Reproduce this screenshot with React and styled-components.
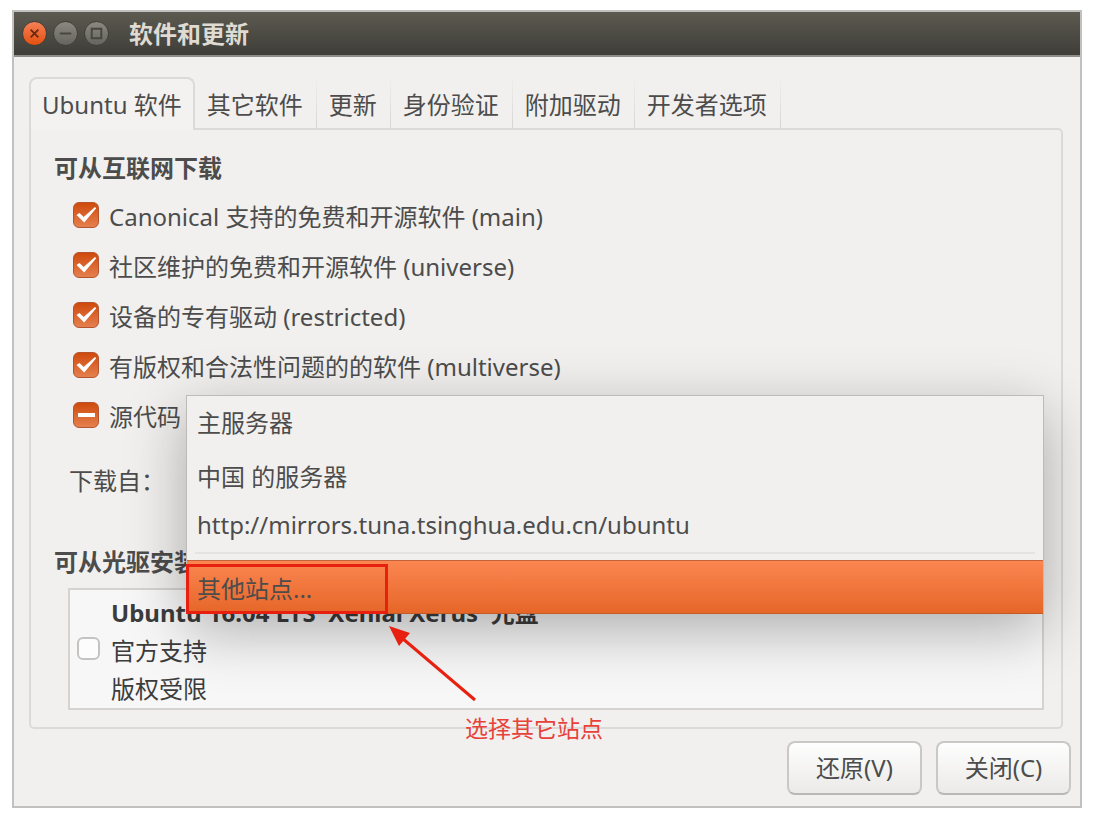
import React, { useState, useRef, useEffect } from 'react'
import styled, { createGlobalStyle, css } from 'styled-components'

const tabs = ['Ubuntu 软件', '其它软件', '更新', '身份验证', '附加驱动', '开发者选项']

const sources = [
  { id: 'main', label: 'Canonical 支持的免费和开源软件 (main)', checked: true },
  { id: 'universe', label: '社区维护的免费和开源软件 (universe)', checked: true },
  { id: 'restricted', label: '设备的专有驱动 (restricted)', checked: true },
  { id: 'multiverse', label: '有版权和合法性问题的的软件 (multiverse)', checked: true },
  { id: 'source', label: '源代码', mixed: true },
]

const servers = ['主服务器', '中国 的服务器', 'http://mirrors.tuna.tsinghua.edu.cn/ubuntu']

const SourceCheck = ({ source }) => {
  const [checked, setChecked] = useState(!!source.checked)
  const [mixed, setMixed] = useState(!!source.mixed)
  const input = useRef(null)

  useEffect(() => {
    input.current.indeterminate = mixed
  }, [mixed])

  const toggle = (e) => {
    setMixed(false)
    setChecked(e.target.checked)
  }

  return (
    <CheckRow htmlFor={source.id}>
      <CheckCell>
        <Check ref={input} id={source.id} type="checkbox" checked={checked} onChange={toggle} />
        <Mark viewBox="0 0 26 26" aria-hidden="true">
          {mixed && <rect x="5" y="11" width="17" height="4" fill="#fff" />}
          {checked && !mixed && <path d="M3.5 13 L6.5 11 L10.6 15 L22 5 L23.2 6.2 L11.2 20.5 Z" fill="#fff" />}
        </Mark>
      </CheckCell>
      <span>{source.label}</span>
    </CheckRow>
  )
}

const App = () => {
  const [tab, setTab] = useState(tabs[0])
  const [disc, setDisc] = useState(false)

  return (
    <>
      <GlobalStyle />
      <Window>
        <TitleBar>
          <WindowButton $close aria-label="关闭">
            <svg viewBox="0 0 24 24"><path d="M8 8 L16 16 M16 8 L8 16" /></svg>
          </WindowButton>
          <WindowButton aria-label="最小化">
            <svg viewBox="0 0 24 24"><path d="M6 12 H18" /></svg>
          </WindowButton>
          <WindowButton aria-label="最大化">
            <svg viewBox="0 0 24 24"><path d="M7 7 H17 V17 H7 Z" /></svg>
          </WindowButton>
          <Title>软件和更新</Title>
        </TitleBar>

        <Body>
          <Tabs role="tablist">
            {tabs.map((name) => (
              <Tab key={name} role="tab" aria-selected={tab === name} $active={tab === name} onClick={() => setTab(name)}>
                {name}
              </Tab>
            ))}
          </Tabs>

          <Panel role="tabpanel">
            <Heading>可从互联网下载</Heading>
            <Sources>
              {sources.map((source) => (
                <SourceCheck key={source.id} source={source} />
              ))}
            </Sources>

            <ServerRow>
              <ServerLabel id="server-label">下载自：</ServerLabel>
              <ServerPicker>
                <ServerButton aria-labelledby="server-label" aria-haspopup="menu" aria-expanded="true" />
                <Menu role="menu">
                  {servers.map((name) => (
                    <MenuItem key={name} role="menuitem" $short={name.startsWith('http')}>{name}</MenuItem>
                  ))}
                  <Separator />
                  <MenuItem role="menuitem" $selected>其他站点...</MenuItem>
                  <Highlight />
                  <Arrow viewBox="0 0 90 80" aria-hidden="true">
                    <path d="M14 12 L87 74" stroke="#e8200f" strokeWidth="3" />
                    <path d="M1 0 L22 7 L11 20 Z" fill="#e8200f" />
                  </Arrow>
                  <Note>选择其它站点</Note>
                </Menu>
              </ServerPicker>
            </ServerRow>

            <Heading>可从光驱安装</Heading>
            <DiscList>
              <DiscCheck id="disc" type="checkbox" checked={disc} onChange={(e) => setDisc(e.target.checked)} />
              <DiscText htmlFor="disc">
                <strong>Ubuntu 16.04 LTS 'Xenial Xerus' 光盘</strong>
                <span>官方支持</span>
                <span>版权受限</span>
              </DiscText>
            </DiscList>
          </Panel>

          <Footer>
            <Button>还原(V)</Button>
            <Button>关闭(C)</Button>
          </Footer>
        </Body>
      </Window>
    </>
  )
}

export default App

const GlobalStyle = createGlobalStyle`
  * {
    box-sizing: border-box;
  }

  body {
    margin: 0;
    background: #fff;
    color: #4c4c4c;
    font-family: "Noto Sans", "Noto Sans CJK SC", sans-serif;
    font-size: 24px;
    line-height: 36px;
  }

  button {
    font: inherit;
    color: inherit;
    padding: 0;
    border: 0;
    background: none;
  }
`

const Window = styled.main`
  margin: 10px 31px 8px 12px;
  border: 2px solid #c2c1bf;
  background: #f1f0ee;
  overflow: hidden;
`

const TitleBar = styled.header`
  display: flex;
  align-items: center;
  gap: 6px;
  height: 45px;
  padding: 0 8px;
  border-bottom: 2px solid #8f8d88;
  background: linear-gradient(#5c5a50, #3e3d38);
`

const WindowButton = styled.button`
  width: 25px;
  height: 25px;
  border-radius: 50%;
  border: 1px solid #403f3a;
  background: ${(p) => (p.$close ? 'linear-gradient(#f58057, #e5500f)' : 'linear-gradient(#8a8880, #66645d)')};

  svg {
    display: block;
    fill: none;
    stroke: ${(p) => (p.$close ? '#6b2a10' : '#46453f')};
    stroke-width: 2;
  }
`

const Title = styled.h1`
  margin: 0 0 0 14px;
  font-size: 24px;
  font-weight: 700;
  color: #dfdbd2;
`

const Body = styled.div`
  padding: 19px 17px 11px 15px;
`

const Tabs = styled.div`
  display: flex;
  align-items: flex-end;
`

const Tab = styled.button`
  height: 52px;
  padding: 6px 13px 0 12px;
  border-right: 1px solid;
  border-image: linear-gradient(transparent, #d6d5d3) 1;

  ${(p) => p.$active && css`
    position: relative;
    height: 53px;
    margin-bottom: -2px;
    padding: 0 11px 0 11px;
    border: 2px solid #dbdad8;
    border-bottom: 0;
    border-image: none;
    border-radius: 8px 8px 0 0;
    background: #f3f2f0;
  `}
`

const Panel = styled.section`
  padding: 20px 17px 17px 23px;
  border: 2px solid #dbdad8;
  border-radius: 0 5px 5px 5px;
`

const Heading = styled.h2`
  margin: 0;
  font-size: 24px;
  font-weight: 700;
`

const Sources = styled.div`
  display: flex;
  flex-direction: column;
  align-items: flex-start;
  padding: 6px 0 12px 19px;
`

const CheckRow = styled.label`
  display: flex;
  align-items: center;
  gap: 10px;
  height: 50px;
`

const CheckCell = styled.span`
  display: grid;
  padding-bottom: 4px;

  > * {
    grid-area: 1 / 1;
    width: 26px;
    height: 26px;
  }
`

const Check = styled.input`
  appearance: none;
  margin: 0;
  border: 1px solid #b5552f;
  border-radius: 6px;
  background: #fcfcfc;

  &:checked,
  &:indeterminate {
    background: linear-gradient(#cf4a0c, #e5804f);
  }
`

const Mark = styled.svg`
  pointer-events: none;
`

const ServerRow = styled.div`
  display: flex;
  align-items: center;
  margin: 0 0 36px 15px;
`

const ServerLabel = styled.span`
  width: 117px;
`

const ServerPicker = styled.div`
  position: relative;
  flex: 1;
`

const ServerButton = styled.button`
  display: block;
  width: 100%;
  height: 54px;
  border: 1px solid #c2c1bf;
  border-radius: 6px;
`

const Menu = styled.div`
  position: absolute;
  top: -59px;
  left: 0;
  right: 0;
  border: 1px solid #bdbbb8;
  border-bottom: 0;
  background: #f1f0ee;
  box-shadow: 0 16px 56px rgba(0, 0, 0, 0.3);
`

const MenuItem = styled.button`
  display: block;
  width: 100%;
  height: ${(p) => (p.$short ? '42px' : '54px')};
  padding: 0 10px;
  text-align: left;

  ${(p) => p.$selected && css`
    padding-top: 3px;
    border-top: 1px solid #c4623a;
    border-bottom: 1px solid #c05a26;
    background: linear-gradient(#fb8651, #e66628);
  `}
`

const Separator = styled.hr`
  height: 2px;
  margin: 6px 8px;
  border: 0;
  background: #e4e3e1;
`

const Highlight = styled.div`
  position: absolute;
  left: -1px;
  bottom: 0;
  width: 202px;
  height: 50px;
  border: 3px solid #e8200f;
  pointer-events: none;
`

const Arrow = styled.svg`
  position: absolute;
  top: 230px;
  left: 201px;
  width: 90px;
  height: 80px;
`

const Note = styled.span`
  position: absolute;
  top: 314px;
  left: 278px;
  font-size: 23px;
  color: #e8413a;
`

const DiscList = styled.div`
  display: flex;
  align-items: center;
  gap: 11px;
  margin: 8px 0 0 14px;
  padding: 4px 7px 0;
  border: 2px solid #d5d2cf;
  background: #f7f7f7;
`

const DiscCheck = styled.input`
  appearance: none;
  width: 23px;
  height: 23px;
  margin: 0 0 5px;
  border: 2px solid #c4c3c1;
  border-radius: 6px;
  background: #fcfcfc;

  &:checked {
    background: #dd5f25;
  }
`

const DiscText = styled.label`
  display: flex;
  flex-direction: column;
  line-height: 38px;
  color: #3c3c3c;
`

const Footer = styled.footer`
  display: flex;
  justify-content: flex-end;
  gap: 14px;
  padding: 12px 0 0;
  margin-right: -8px;
`

const Button = styled.button`
  min-width: 135px;
  height: 54px;
  border: 2px solid #c9c8c6;
  border-bottom-color: #b9b8b6;
  border-radius: 8px;
  background: linear-gradient(#fefefe, #ebeae8);
`
